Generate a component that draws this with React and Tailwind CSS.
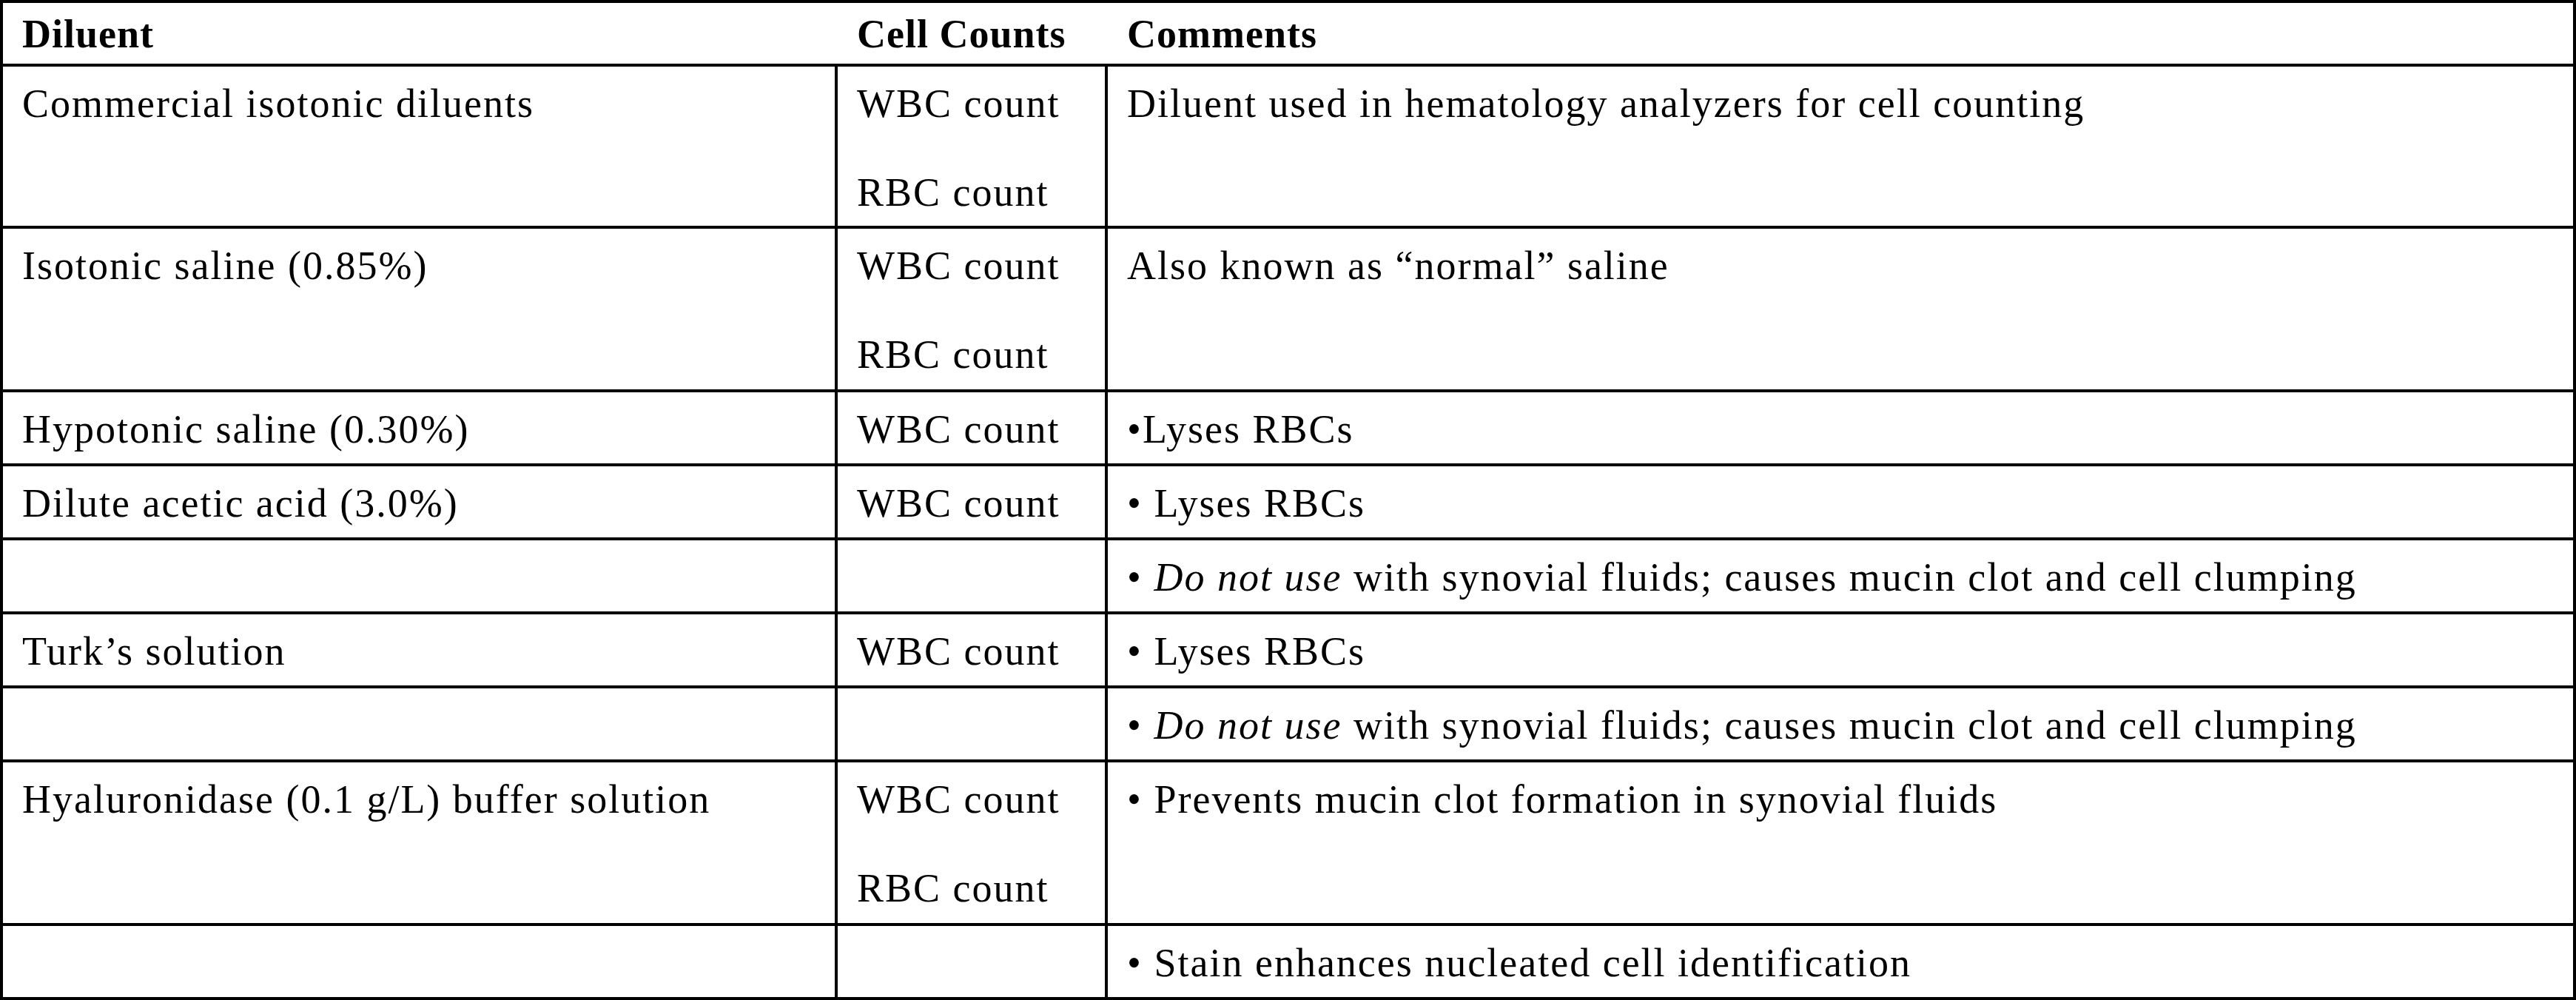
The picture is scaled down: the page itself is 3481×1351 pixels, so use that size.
import React from "react";

const rows = [
  { h: "h-[219px]", d: "Commercial isotonic diluents", c: ["WBC count", "RBC count"], m: [<>Diluent used in hematology analyzers for cell counting</>] },
  { h: "h-[221px]", d: "Isotonic saline (0.85%)", c: ["WBC count", "RBC count"], m: [<>Also known as “normal” saline</>] },
  { h: "h-[100px]", d: "Hypotonic saline (0.30%)", c: ["WBC count"], m: [<>•Lyses RBCs</>] },
  { h: "h-[100px]", d: "Dilute acetic acid (3.0%)", c: ["WBC count"], m: [<>• Lyses RBCs</>] },
  { h: "h-[100px]", d: "", c: [], m: [<>• <i>Do not use</i> with synovial fluids; causes mucin clot and cell clumping</>] },
  { h: "h-[100px]", d: "Turk’s solution", c: ["WBC count"], m: [<>• Lyses RBCs</>] },
  { h: "h-[100px]", d: "", c: [], m: [<>• <i>Do not use</i> with synovial fluids; causes mucin clot and cell clumping</>] },
  { h: "h-[221px]", d: "Hyaluronidase (0.1 g/L) buffer solution", c: ["WBC count", "RBC count"], m: [<>• Prevents mucin clot formation in synovial fluids</>] },
  { h: "h-[96px]", d: "", c: [], m: [<>• Stain enhances nucleated cell identification</>], last: true },
];

function Lines({ items }) {
  return (
    <div className="flex flex-col gap-[20px]">
      {items.map((t, i) => (
        <div key={i} className="leading-[100px] whitespace-nowrap">{t}</div>
      ))}
    </div>
  );
}

export default function App() {
  return (
    <div
      className="w-[3481px] h-[1351px] bg-white text-black border-4 border-black flex flex-col text-[54px] tracking-[2px] overflow-hidden"
      style={{ fontFamily: '"Liberation Serif", "Times New Roman", serif' }}
    >
      <div className="h-[86px] shrink-0 border-b-4 border-black flex font-bold tracking-[1px] leading-[80px] pt-[2px]">
        <div className="w-[1128px] shrink-0 pl-[26px]">Diluent</div>
        <div className="w-[365px] shrink-0 pl-[26px]">Cell Counts</div>
        <div className="flex-1 pl-[26px]">Comments</div>
      </div>
      {rows.map((r, i) => (
        <div key={i} className={`${r.h} shrink-0 flex ${r.last ? "" : "border-b-4 border-black"}`}>
          <div className="w-[1128px] shrink-0 border-r-4 border-black pl-[26px]">
            {r.d ? <Lines items={[r.d]} /> : null}
          </div>
          <div className="w-[365px] shrink-0 border-r-4 border-black pl-[26px]">
            <Lines items={r.c} />
          </div>
          <div className="flex-1 pl-[26px]">
            <Lines items={r.m} />
          </div>
        </div>
      ))}
    </div>
  );
}
